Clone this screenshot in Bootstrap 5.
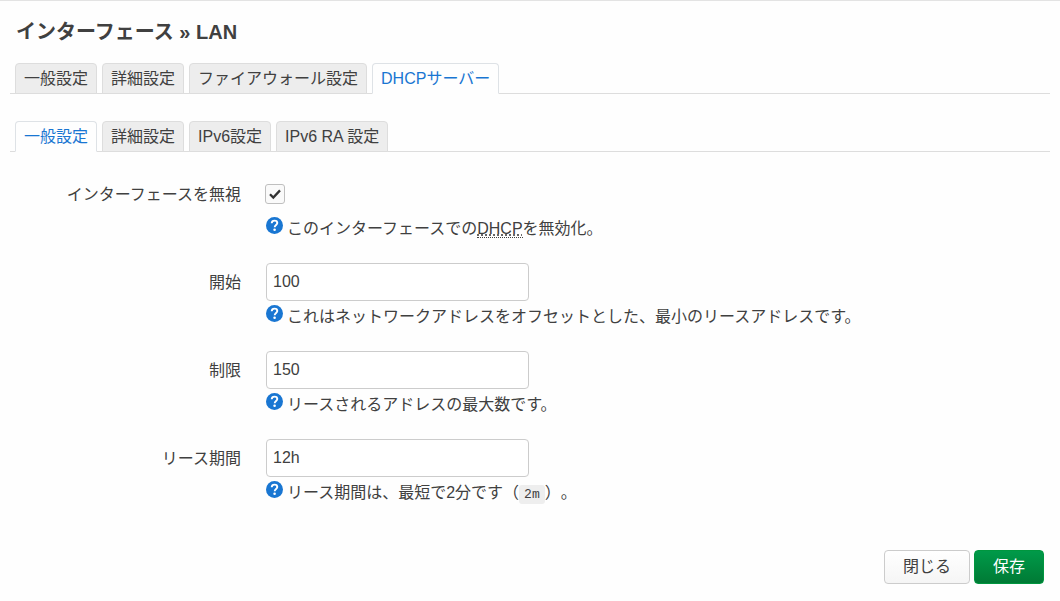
<!DOCTYPE html>
<html lang="ja">
<head>
<meta charset="utf-8">
<meta name="viewport" content="width=device-width, initial-scale=1">
<title>インターフェース » LAN</title>
<link href="https://cdn.jsdelivr.net/npm/bootstrap@5.3.0/dist/css/bootstrap.min.css" rel="stylesheet">
<style>
  body { font-family: "Liberation Sans", "Noto Sans CJK JP", sans-serif; font-size: 16px; line-height: 20px; color: #404040; background: #fefefe; border-top: 1px solid #e3e3e3; text-spacing-trim: space-all; font-feature-settings: "chws" 0; }
  .dialog-body { padding: 20px 10px 16px; }
  .dialog-title { font-size: 20px; line-height: 22px; font-weight: 700; padding-left: 6px; margin-bottom: 20px; }
  .tab-row { --bs-nav-tabs-border-color: #ddd; padding-left: 5px; gap: 5px; margin-bottom: 27px; }
  .tab-row .nav-link { padding: 5px 8px 4px; line-height: 20px; color: #404040; background: #ededed; border: 1px solid #ddd; border-radius: 4px 4px 0 0; }
  .tab-row .nav-link.active { color: #1976d2; background: #fefefe; border-bottom-color: #fefefe; }
  .settings { display: grid; gap: 24px; padding-top: 23px; }
  .field-row { display: grid; grid-template-columns: 231px minmax(0, 1fr); column-gap: 25px; }
  .field-row > label { text-align: right; line-height: 20px; padding-top: 10px; }
  .field-row .form-control { max-width: 263px; height: 38px; padding: 4px 6px; font-size: 16px; color: #404040; background: #fff; border: 1px solid #ccc; border-radius: 4px; }
  .field-row .form-check-input { width: 20px; height: 20px; margin: 9px 0 9px -1px; border: 1px solid #bfbfbf; border-radius: 3px; background-color: #fafafa; }
  .field-row .form-check-input:checked { background-image: url("data:image/svg+xml,%3csvg xmlns='http://www.w3.org/2000/svg' viewBox='0 0 18 18'%3e%3cpath fill='none' stroke='%23333' stroke-width='2.3' d='M4 9.2 7.3 12.5 14 5.4'/%3e%3c/svg%3e"); background-size: contain; }
  .hint { display: flex; align-items: flex-start; gap: 4px; line-height: 20px; padding-top: 4px; }
  .hint svg { flex: none; width: 17px; height: 17px; }
  .hint span { padding-top: 2px; }
  .hint abbr { border-bottom: 1px dotted #404040; line-height: 17px; display: inline-block; }
  .hint code { font: 13px/17px "Liberation Mono", monospace; color: #404040; background: #eee; border-radius: 3px; padding: 2px 5px; }
  .dialog-actions { gap: 4px; padding: 47px 6px 0; }
  .dialog-actions .btn { font-size: 16px; line-height: 20px; padding: 6px 18px; border-radius: 4px; }
  .btn-close-dialog, .btn-close-dialog:hover { color: #404040; border-color: #ccc; background: linear-gradient(#fff, #f5f5f5); }
  .btn-save, .btn-save:hover { color: #fff; border-color: #00963f; background: linear-gradient(#009a49, #007a35); }
</style>
</head>
<body>
<svg class="d-none" aria-hidden="true">
  <symbol id="help" viewBox="0 0 17 17">
    <circle cx="8.5" cy="8.5" r="8.5" fill="#1976d2"/>
    <path d="M5.7 6.2C5.8 4.4 6.9 3.6 8.5 3.6c1.7 0 2.8.9 2.8 2.4 0 1.9-2.6 2-2.6 4.2" fill="none" stroke="#fff" stroke-width="1.9"/>
    <circle cx="8.6" cy="12.8" r="1.3" fill="#fff"/>
  </symbol>
</svg>
<main class="dialog-body">
  <h1 class="dialog-title">インターフェース » LAN</h1>
  <ul class="nav nav-tabs tab-row">
    <li class="nav-item"><a class="nav-link" href="#">一般設定</a></li>
    <li class="nav-item"><a class="nav-link" href="#">詳細設定</a></li>
    <li class="nav-item"><a class="nav-link" href="#">ファイアウォール設定</a></li>
    <li class="nav-item"><a class="nav-link active" aria-current="page" href="#">DHCPサーバー</a></li>
  </ul>
  <ul class="nav nav-tabs tab-row mb-0">
    <li class="nav-item"><a class="nav-link active" aria-current="page" href="#">一般設定</a></li>
    <li class="nav-item"><a class="nav-link" href="#">詳細設定</a></li>
    <li class="nav-item"><a class="nav-link" href="#">IPv6設定</a></li>
    <li class="nav-item"><a class="nav-link" href="#">IPv6 RA 設定</a></li>
  </ul>
  <form>
    <div class="settings">
      <div class="field-row">
        <label for="ignore">インターフェースを無視</label>
        <div>
          <input class="form-check-input d-block" type="checkbox" id="ignore" checked>
          <div class="hint"><svg aria-hidden="true"><use href="#help"/></svg><span>このインターフェースでの<abbr title="Dynamic Host Configuration Protocol">DHCP</abbr>を無効化。</span></div>
        </div>
      </div>
      <div class="field-row">
        <label for="start">開始</label>
        <div>
          <input class="form-control" type="text" id="start" value="100">
          <div class="hint"><svg aria-hidden="true"><use href="#help"/></svg><span>これはネットワークアドレスをオフセットとした、最小のリースアドレスです。</span></div>
        </div>
      </div>
      <div class="field-row">
        <label for="limit">制限</label>
        <div>
          <input class="form-control" type="text" id="limit" value="150">
          <div class="hint"><svg aria-hidden="true"><use href="#help"/></svg><span>リースされるアドレスの最大数です。</span></div>
        </div>
      </div>
      <div class="field-row">
        <label for="lease">リース期間</label>
        <div>
          <input class="form-control" type="text" id="lease" value="12h">
          <div class="hint"><svg aria-hidden="true"><use href="#help"/></svg><span>リース期間は、最短で2分です（<code>2m</code>）。</span></div>
        </div>
      </div>
    </div>
    <div class="dialog-actions d-flex justify-content-end">
      <button type="button" class="btn btn-close-dialog">閉じる</button>
      <button type="submit" class="btn btn-save">保存</button>
    </div>
  </form>
</main>
<script src="https://cdn.jsdelivr.net/npm/bootstrap@5.3.0/dist/js/bootstrap.bundle.min.js"></script>
</body>
</html>
